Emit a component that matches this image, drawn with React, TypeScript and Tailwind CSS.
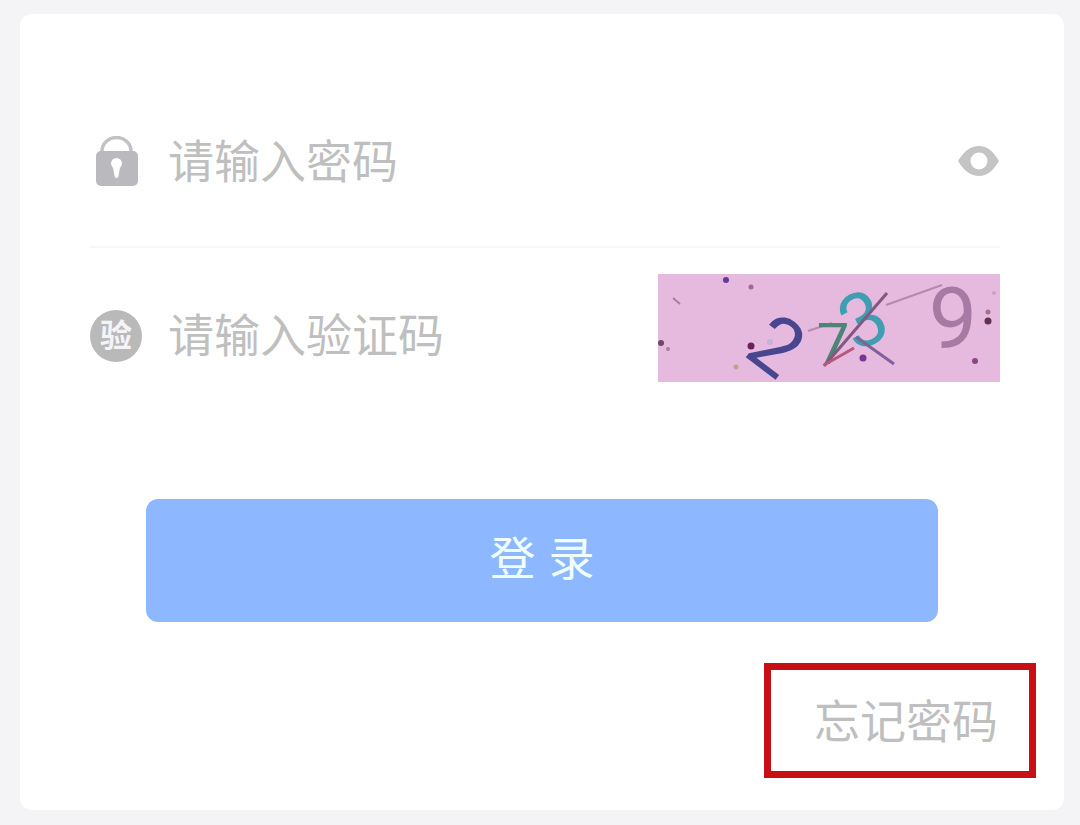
import { useState } from 'react'

function LockIcon() {
  return (
    <svg viewBox="0 0 52 52" className="h-13 w-13 shrink-0" aria-hidden="true">
      <path d="M12 18v-3a14.500 13.500 0 0 1 29 0v3" fill="none" stroke="#c2c2c4" strokeWidth="3.500" />
      <rect x="6" y="15" width="42" height="35" rx="5" fill="#b9b9be" />
      <path d="M26.500 22a5.500 5.500 0 0 0-5.500 5.500c0 2 1.500 3 2.200 5l1.300 7.500a2 2 0 0 0 4 0l1.300-7.500c.7-2 2.200-3 2.200-5a5.500 5.500 0 0 0-5.500-5.500z" fill="#fff" />
    </svg>
  )
}

function EyeIcon() {
  return (
    <svg viewBox="0 0 42 34" className="h-[34px] w-[42px]" aria-hidden="true">
      <path
        fillRule="evenodd"
        d="M0 16C6 6 13 1 21 1s14 5 20 15c-6 10-12 15-20 15S6 26 0 16zm21-8.500a8.500 8.500 0 1 0 0 17 8.500 8.500 0 0 0 0-17z"
        fill="#c4c4c4"
      />
    </svg>
  )
}

const dots = [
  { x: 68, y: 6, r: 3, fill: '#65389c' },
  { x: 93, y: 13, r: 2.5, fill: '#a9629a' },
  { x: 3, y: 69, r: 3, fill: '#6d4668' },
  { x: 10, y: 75, r: 2, fill: '#b07ba8' },
  { x: 93, y: 72, r: 3.5, fill: '#6d1f58' },
  { x: 78, y: 93, r: 2.5, fill: '#bda08d' },
  { x: 112, y: 68, r: 3, fill: '#c5b1da' },
  { x: 205, y: 84, r: 3.5, fill: '#7b3494' },
  { x: 330, y: 38, r: 2.5, fill: '#a57088' },
  { x: 330, y: 47, r: 3.5, fill: '#63304f' },
  { x: 317, y: 87, r: 3, fill: '#8a4685' },
  { x: 336, y: 19, r: 2, fill: '#cf9fcb' },
]

function Captcha() {
  return (
    <svg
      viewBox="0 0 342 108"
      className="h-[108px] w-[342px] overflow-visible bg-[#e6b9df]"
      role="img"
      aria-label="验证码图片"
    >
      {dots.map((d) => (
        <circle key={`${d.x}-${d.y}`} cx={d.x} cy={d.y} r={d.r} fill={d.fill} />
      ))}
      <path d="M15 24l7 6" stroke="#a77ba6" strokeWidth="2" />
      <path d="M150 57L174 49M228 31L284 11" stroke="#b58aac" strokeWidth="2" />
      <g fontFamily="Roboto, sans-serif" textAnchor="middle">
        <text transform="translate(102 94) rotate(37)" fontSize="80" fill="#47468f">2</text>
        <text transform="translate(175 90)" fontSize="58" fill="#4a8577">7</text>
        <text transform="translate(217 69) rotate(-27)" fontSize="76" fill="#3f9fb0">3</text>
        <text transform="translate(295 74)" fontSize="86" fill="#a77aa4">9</text>
      </g>
      <path d="M229 19L166 92" stroke="#83577f" strokeWidth="3" />
      <path d="M166 91l30-17" stroke="#b8587b" strokeWidth="3" />
      <path d="M198 63l38 27" stroke="#80629a" strokeWidth="3" />
    </svg>
  )
}

const inputClass =
  'w-full min-w-0 flex-1 bg-transparent text-[46px] leading-16 text-[#888] placeholder:text-[#bfbfbf] focus:outline-none'

export default function App() {
  const [showPassword, setShowPassword] = useState(false)

  return (
    <main className="bg-[#f4f4f7] pt-3.5 pr-4 pb-4 pl-5 font-['Liberation_Sans','Noto_Sans_CJK_SC',sans-serif]">
      <form
        onSubmit={(e) => e.preventDefault()}
        className="flex flex-col rounded-xl bg-white pt-16 pb-8"
      >
        <div className="mr-16 ml-[70px] flex h-[170px] items-center gap-[26px] border-b-2 border-[#f7f7f7]">
          <label htmlFor="password" aria-label="密码">
            <LockIcon />
          </label>
          <input
            id="password"
            type={showPassword ? 'text' : 'password'}
            placeholder="请输入密码"
            className={inputClass}
          />
          <button type="button" aria-label="显示密码" onClick={() => setShowPassword((cur) => !cur)}>
            <EyeIcon />
          </button>
        </div>

        <div className="mr-16 ml-[70px] flex h-[160px] items-center gap-[26px]">
          <div className="flex min-w-0 flex-1 items-center gap-[26px] pt-4">
            <label
              htmlFor="captcha"
              className="flex size-13 shrink-0 items-center justify-center rounded-full bg-[#b9b9b9] text-[32px] leading-8 font-bold text-[#f4f4f8]"
            >
              验
            </label>
            <input id="captcha" type="text" placeholder="请输入验证码" className={inputClass} />
          </div>
          <button type="button" aria-label="刷新验证码" className="shrink-0">
            <Captcha />
          </button>
        </div>

        <button
          type="submit"
          className="mt-[91px] mr-[126px] ml-[126px] h-[123px] rounded-xl bg-[#8db8ff] pb-1 text-[46px] leading-16 text-[#f0ffff]"
        >
          登 录
        </button>

        <a
          href="#forgot"
          className="mt-[41px] mr-7 self-end border-[7px] border-[#c80f14] pt-5 pr-[31px] pb-[17px] pl-[43px] text-[46px] leading-16 text-[#bfbfbf]"
        >
          忘记密码
        </a>
      </form>
    </main>
  )
}
